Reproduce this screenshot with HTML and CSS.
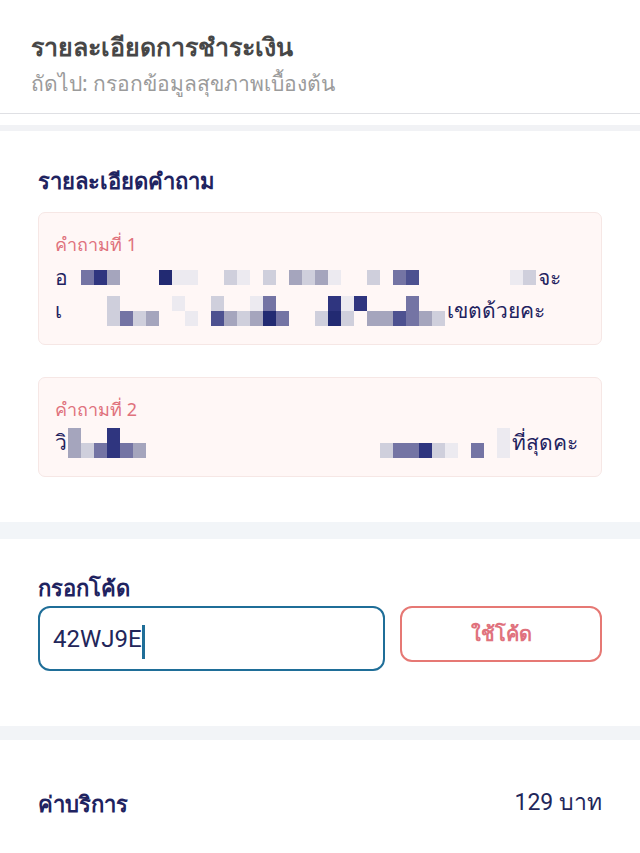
FILE: index.html
```html
<!DOCTYPE html>
<html lang="th">
<head>
<meta charset="utf-8">
<title>รายละเอียดการชำระเงิน</title>
<link rel="stylesheet" href="styles.css">
</head>
<body>
<header class="topbar">
  <h1 class="title">รายละเอียดการชำระเงิน</h1>
  <p class="subtitle">ถัดไป: กรอกข้อมูลสุขภาพเบื้องต้น</p>
</header>
<div class="gap-white"></div>
<section class="section questions">
  <h2 class="heading">รายละเอียดคำถาม</h2>
  <div class="card">
    <div class="q-label">คำถามที่ 1</div>
    <div class="mline one">
      <span class="c t">อ</span><span class="c"></span><span class="c s3"></span><span class="c s5"></span><span class="c s2"></span><span class="c"></span><span class="c"></span><span class="c"></span><span class="c s6"></span><span class="c s0"></span><span class="c s0"></span><span class="c"></span><span class="c"></span><span class="c s1"></span><span class="c s0"></span><span class="c"></span><span class="c s1"></span><span class="c"></span><span class="c s2"></span><span class="c s1"></span><span class="c s2"></span><span class="c s0"></span><span class="c"></span><span class="c"></span><span class="c s1"></span><span class="c"></span><span class="c s3"></span><span class="c s4"></span><span class="c"></span><span class="c"></span><span class="c"></span><span class="c"></span><span class="c"></span><span class="c"></span><span class="c"></span><span class="c s0"></span><span class="c s1"></span><span class="tail">จะ</span>
    </div>
    <div class="mline two">
      <span class="c t">เ</span><span class="c"></span><span class="c"></span><span class="c"></span><span class="c"><i class="s1"></i><i class="s1"></i></span><span class="c"><i></i><i class="s3"></i></span><span class="c"><i></i><i class="s1"></i></span><span class="c"><i></i><i class="s2"></i></span><span class="c"></span><span class="c"><i class="s0"></i><i></i></span><span class="c"><i></i><i class="s0"></i></span><span class="c"></span><span class="c"><i class="s1"></i><i class="s4"></i></span><span class="c"><i></i><i class="s2"></i></span><span class="c"><i></i><i class="s1"></i></span><span class="c"><i class="s0"></i><i class="s2"></i></span><span class="c"><i class="s3"></i><i class="s6"></i></span><span class="c"><i></i><i class="s3"></i></span><span class="c"></span><span class="c"></span><span class="c"><i></i><i class="s1"></i></span><span class="c"><i class="s5"></i><i class="s6"></i></span><span class="c"><i class="s0"></i><i class="s1"></i></span><span class="c"><i class="s5"></i><i></i></span><span class="c"><i></i><i class="s2"></i></span><span class="c"><i></i><i class="s2"></i></span><span class="c"><i></i><i class="s4"></i></span><span class="c"><i class="s3"></i><i class="s3"></i></span><span class="c"><i></i><i class="s2"></i></span><span class="c"><i></i><i class="s1"></i></span><span class="tail">เขตด้วยคะ</span>
    </div>
  </div>
  <div class="card">
    <div class="q-label">คำถามที่ 2</div>
    <div class="mline two">
      <span class="c t">วิ</span><span class="c"><i class="s2"></i><i class="s2"></i></span><span class="c"><i></i><i class="s1"></i></span><span class="c"><i></i><i class="s3"></i></span><span class="c"><i class="s5"></i><i class="s5"></i></span><span class="c"><i></i><i class="s3"></i></span><span class="c"><i></i><i class="s2"></i></span><span class="c"></span><span class="c"></span><span class="c"></span><span class="c"></span><span class="c"></span><span class="c"></span><span class="c"></span><span class="c"></span><span class="c"></span><span class="c"></span><span class="c"></span><span class="c"></span><span class="c"></span><span class="c"></span><span class="c"></span><span class="c"></span><span class="c"></span><span class="c"></span><span class="c"><i></i><i class="s1"></i></span><span class="c"><i></i><i class="s3"></i></span><span class="c"><i></i><i class="s3"></i></span><span class="c"><i></i><i class="s5"></i></span><span class="c"><i></i><i class="s1"></i></span><span class="c"><i></i><i class="s0"></i></span><span class="c"></span><span class="c"><i></i><i class="s3"></i></span><span class="c"></span><span class="c"><i class="s0"></i><i class="s0"></i></span><span class="tail">ที่สุดคะ</span>
    </div>
  </div>
</section>
<section class="section code">
  <h2 class="heading">กรอกโค้ด</h2>
  <div class="code-row">
    <div class="code-input"><span class="code-value">42WJ9E</span><span class="caret"></span></div>
    <button class="code-btn" type="button">ใช้โค้ด</button>
  </div>
</section>
<section class="section fee">
  <div class="fee-row">
    <span class="fee-label">ค่าบริการ</span>
    <span class="fee-value">129 บาท</span>
  </div>
</section>
</body>
</html>
```
FILE: styles.css
```css
* { box-sizing: border-box; }
html, body { margin: 0; padding: 0; background: #ffffff; }
body {
  font-family: "Noto Sans", "Open Sans", sans-serif;
  color: #22265a;
  width: 640px;
  overflow: hidden;
}
.topbar {
  padding: 30px 31px 15px;
  border-bottom: 1px solid #dfe0e4;
}
.title {
  margin: 0;
  font-size: 25px;
  line-height: 32px;
  font-weight: 700;
  color: #474747;
}
.subtitle {
  margin: 6px 0 0;
  font-size: 21px;
  line-height: 30px;
  color: #9b9b9b;
}
.gap-white { height: 11px; }
.section { background: #ffffff; padding: 0 38px; }
.questions {
  border-top: 6px solid #f1f2f5;
  padding-top: 35px;
  padding-bottom: 45px;
}
.heading {
  margin: 0;
  font-size: 22px;
  line-height: 28px;
  font-weight: 700;
  color: #1f2360;
}
.card {
  margin-top: 18px;
  background: #fff7f6;
  border: 1px solid #f6e7e5;
  border-radius: 7px;
  padding: 15px 16px 17px;
}
.card + .card { margin-top: 32px; }
.q-label {
  font-size: 18px;
  line-height: 33px;
  color: #e0727d;
}
.mline {
  display: flex;
  align-items: center;
  height: 33px;
  font-size: 21px;
  color: #1f2360;
}
.c {
  flex: 0 0 13px;
  width: 13px;
  height: 15px;
  display: flex;
  flex-direction: column;
}
.mline.two .c { height: 30px; }
.c i { display: block; flex: 1 1 0; }
.c.t {
  height: auto;
  display: block;
  white-space: nowrap;
  line-height: 33px;
}
.mline.two .c.t { height: auto; }
.tail { white-space: nowrap; padding-left: 2px; line-height: 33px; }
.s0 { background: #eceaf0; }
.s1 { background: #cfcfdc; }
.s2 { background: #a5a5bd; }
.s3 { background: #7474a4; }
.s4 { background: #4d5190; }
.s5 { background: #2f357f; }
.s6 { background: #222a72; }
.code {
  border-top: 17px solid #f2f5f8;
  padding-top: 34px;
  padding-bottom: 55px;
}
.code-row {
  margin-top: 5px;
  display: flex;
  align-items: flex-start;
  gap: 15px;
}
.code-input {
  width: 347px;
  height: 65px;
  border: 2px solid #1f6e98;
  border-radius: 12px;
  display: flex;
  align-items: center;
  padding: 0 13px;
}
.code-value {
  font-family: "Roboto", "Noto Sans", sans-serif;
  font-size: 24px;
  color: #22265a;
}
.caret {
  display: inline-block;
  width: 3px;
  height: 34px;
  margin-top: 6px;
  background: #1f6e98;
}
.code-btn {
  width: 202px;
  height: 56px;
  border: 2px solid #e67874;
  border-radius: 12px;
  background: #ffffff;
  font-family: "Noto Sans", sans-serif;
  font-size: 20px;
  font-weight: 600;
  color: #e0727d;
  padding: 0;
}
.fee {
  border-top: 14px solid #f2f4f7;
  padding-top: 49px;
  padding-bottom: 40px;
}
.fee-row {
  display: flex;
  justify-content: space-between;
  align-items: center;
  line-height: 28px;
}
.fee-label { font-size: 22px; font-weight: 700; color: #1f2360; }
.fee-value { font-size: 23px; color: #22265a; font-family: "Roboto", "Noto Sans", sans-serif; }
```
